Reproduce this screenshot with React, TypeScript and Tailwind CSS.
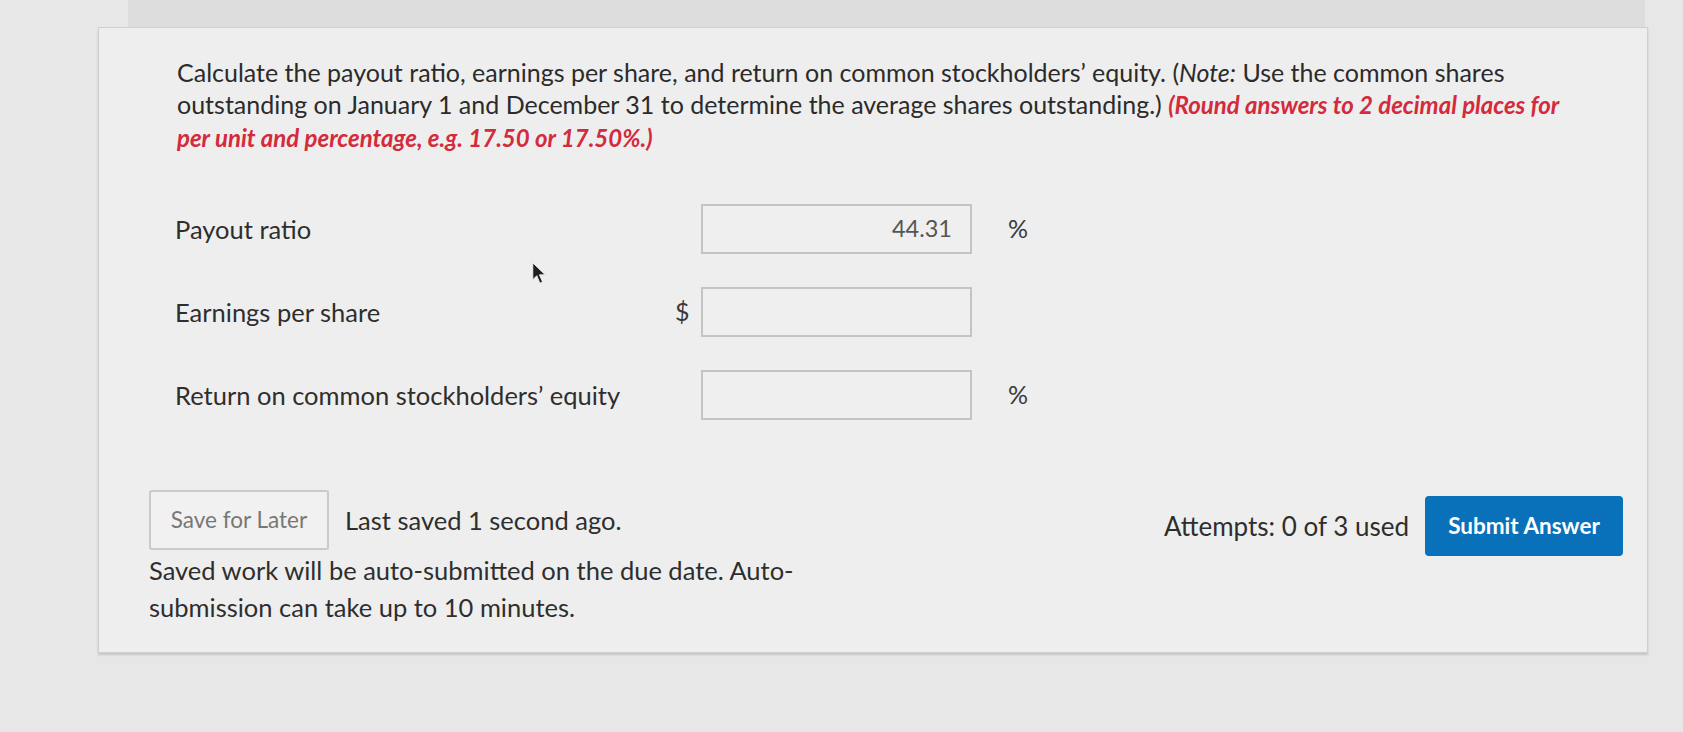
import React from 'react';

const font = { fontFamily: 'Lato, "Open Sans", "Liberation Sans", sans-serif' };

// Answer row: label, optional unit before the box, box, optional unit after
const AnswerRow: React.FC<{ label: string; value?: string; prefix?: string; suffix?: string }> = ({ label, value, prefix, suffix }) => (
    <div className="flex items-center h-[50px]">
        <div className="w-[500px] text-[25.5px] text-[#2e2e2e]">{label}</div>
        <div className="w-[26px] text-[25px] text-[#3a3a3a]">{prefix}</div>
        <div className="w-[271px] h-[50px] border-2 border-[#c4c4c4] bg-[#efefef] flex items-center justify-end pr-[18px] text-[23.5px] text-[#555]">
            {value}
        </div>
        <div className="ml-[36px] text-[25px] text-[#3a3a3a]">{suffix}</div>
    </div>
);

const Cursor = () => (
    <svg className="absolute left-[531px] top-[262px]" width="16" height="23" viewBox="0 0 18 26">
        <path d="M2 1 L2 20 L6.5 15.5 L10 24 L13 22.5 L9.5 14.5 L16 14.5 Z" fill="#1f1f1f" stroke="#f0f0f0" strokeWidth="1" />
    </svg>
);

const App: React.FC = () => {
    return (
        <div className="relative w-full h-[732px] bg-[#e7e7e7] overflow-hidden" style={font}>
            {/* band above the panel */}
            <div className="ml-[128px] w-[1517px] h-[27px] bg-[#dddddd]" />

            {/* question panel */}
            <div className="ml-[98px] w-[1550px] h-[626px] bg-[#eeeeee] border border-[#d0d0d0] shadow-[0_2px_2px_rgba(0,0,0,0.15)]">
                <p className="ml-[78px] mr-[72px] mt-[28px] text-[25px] leading-[32px] text-[#2b2b2b]">
                    Calculate the payout ratio, earnings per share, and return on common stockholders’ equity. (<i>Note:</i> Use the common shares outstanding on January 1 and December 31 to determine the average shares outstanding.){' '}
                    <b className="italic text-[24px] text-[#d42a3c]">(Round answers to 2 decimal places for per unit and percentage, e.g. 17.50 or 17.50%.)</b>
                </p>

                <div className="ml-[76px] mt-[50px] flex flex-col gap-[33px]">
                    <AnswerRow label="Payout ratio" value="44.31" suffix="%" />
                    <AnswerRow label="Earnings per share" prefix="$" />
                    <AnswerRow label="Return on common stockholders’ equity" suffix="%" />
                </div>

                <div className="mt-[70px] ml-[50px] mr-[24px] flex justify-between items-start">
                    <div className="w-[680px]">
                        <div className="flex items-center">
                            <button className="w-[180px] h-[60px] border-2 border-[#cacaca] rounded-[3px] bg-[#f1f1f1] text-[22.5px] text-[#777]">
                                Save for Later
                            </button>
                            <span className="ml-[16px] text-[25.5px] text-[#2e2e2e]">Last saved 1 second ago.</span>
                        </div>
                        <p className="mt-[2px] text-[25.5px] leading-[37px] text-[#2e2e2e]">
                            Saved work will be auto-submitted on the due date. Auto-submission can take up to 10 minutes.
                        </p>
                    </div>
                    <div className="flex items-center mt-[6px]">
                        <span className="text-[26px] text-[#2e2e2e]">Attempts: 0 of 3 used</span>
                        <button className="ml-[16px] w-[198px] h-[60px] rounded-[4px] bg-[#0871ba] text-white text-[22.5px] font-bold">
                            Submit Answer
                        </button>
                    </div>
                </div>
            </div>

            <Cursor />
        </div>
    );
};

export default App;
